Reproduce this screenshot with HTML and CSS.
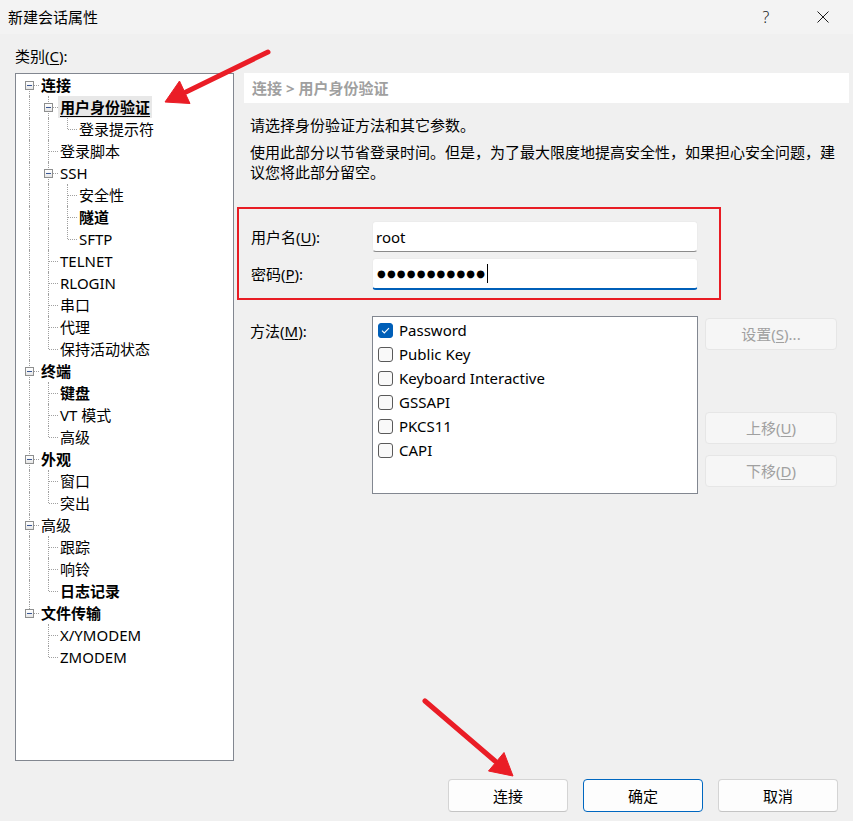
FILE: index.html
```html
<!DOCTYPE html>
<html lang="zh-CN">
<head>
<meta charset="utf-8">
<title>新建会话属性</title>
<link rel="stylesheet" href="styles.css">
</head>
<body>
<div class="dialog">
  <div class="titlebar">
    <span class="title">新建会话属性</span>
    <span class="tb-btn help">?</span>
    <span class="tb-btn close"><svg width="12" height="12" viewBox="0 0 12 12"><path d="M0.5 0.5L11.5 11.5M11.5 0.5L0.5 11.5" stroke="#1b1b1b" stroke-width="1" fill="none"/></svg></span>
  </div>

  <div class="main">
    <div class="cat-label">类别(<u>C</u>):</div>

    <div class="tree">
      <div class="row"><span class="c first"><i class="tog"></i></span><span class="lbl b">连接</span></div>
      <div class="row"><span class="c v"></span><span class="c tee"><i class="tog"></i></span><span class="lbl b sel">用户身份验证</span></div>
      <div class="row"><span class="c v"></span><span class="c v"></span><span class="c ell"></span><span class="lbl">登录提示符</span></div>
      <div class="row"><span class="c v"></span><span class="c tee"></span><span class="lbl">登录脚本</span></div>
      <div class="row"><span class="c v"></span><span class="c tee"><i class="tog"></i></span><span class="lbl">SSH</span></div>
      <div class="row"><span class="c v"></span><span class="c v"></span><span class="c tee"></span><span class="lbl">安全性</span></div>
      <div class="row"><span class="c v"></span><span class="c v"></span><span class="c tee"></span><span class="lbl b">隧道</span></div>
      <div class="row"><span class="c v"></span><span class="c v"></span><span class="c ell"></span><span class="lbl">SFTP</span></div>
      <div class="row"><span class="c v"></span><span class="c tee"></span><span class="lbl">TELNET</span></div>
      <div class="row"><span class="c v"></span><span class="c tee"></span><span class="lbl">RLOGIN</span></div>
      <div class="row"><span class="c v"></span><span class="c tee"></span><span class="lbl">串口</span></div>
      <div class="row"><span class="c v"></span><span class="c tee"></span><span class="lbl">代理</span></div>
      <div class="row"><span class="c v"></span><span class="c ell"></span><span class="lbl">保持活动状态</span></div>
      <div class="row"><span class="c tee"><i class="tog"></i></span><span class="lbl b">终端</span></div>
      <div class="row"><span class="c v"></span><span class="c tee"></span><span class="lbl b">键盘</span></div>
      <div class="row"><span class="c v"></span><span class="c tee"></span><span class="lbl">VT 模式</span></div>
      <div class="row"><span class="c v"></span><span class="c ell"></span><span class="lbl">高级</span></div>
      <div class="row"><span class="c tee"><i class="tog"></i></span><span class="lbl b">外观</span></div>
      <div class="row"><span class="c v"></span><span class="c tee"></span><span class="lbl">窗口</span></div>
      <div class="row"><span class="c v"></span><span class="c ell"></span><span class="lbl">突出</span></div>
      <div class="row"><span class="c tee"><i class="tog"></i></span><span class="lbl">高级</span></div>
      <div class="row"><span class="c v"></span><span class="c tee"></span><span class="lbl">跟踪</span></div>
      <div class="row"><span class="c v"></span><span class="c tee"></span><span class="lbl">响铃</span></div>
      <div class="row"><span class="c v"></span><span class="c ell"></span><span class="lbl b">日志记录</span></div>
      <div class="row"><span class="c ell"><i class="tog"></i></span><span class="lbl b">文件传输</span></div>
      <div class="row"><span class="c"></span><span class="c tee"></span><span class="lbl">X/YMODEM</span></div>
      <div class="row"><span class="c"></span><span class="c ell"></span><span class="lbl">ZMODEM</span></div>
    </div>

    <div class="panel">
      <div class="crumb">连接 &gt; 用户身份验证</div>
      <p class="desc1">请选择身份验证方法和其它参数。</p>
      <p class="desc2">使用此部分以节省登录时间。但是，为了最大限度地提高安全性，如果担心安全问题，建议您将此部分留空。</p>

      <div class="creds">
        <span class="flabel">用户名(<u>U</u>):</span>
        <div class="field">root</div>
        <span class="flabel">密码(<u>P</u>):</span>
        <div class="field focus"><span class="dots">●●●●●●●●●●●</span><span class="caret"></span></div>
      </div>

      <div class="methods">
        <span class="mlabel">方法(<u>M</u>):</span>
        <div class="list">
          <div class="item"><span class="cb on"><svg width="15" height="15" viewBox="0 0 15 15"><path d="M4 7.6L6.3 9.9L11 5.2" stroke="#fff" stroke-width="1.1" fill="none"/></svg></span>Password</div>
          <div class="item"><span class="cb"></span>Public Key</div>
          <div class="item"><span class="cb"></span>Keyboard Interactive</div>
          <div class="item"><span class="cb"></span>GSSAPI</div>
          <div class="item"><span class="cb"></span>PKCS11</div>
          <div class="item"><span class="cb"></span>CAPI</div>
        </div>
        <div class="side">
          <div class="btn dis b1">设置(<u>S</u>)...</div>
          <div class="btn dis b2">上移(<u>U</u>)</div>
          <div class="btn dis b3">下移(<u>D</u>)</div>
        </div>
      </div>
    </div>
  </div>

  <div class="footer">
    <div class="btn fbtn">连接</div>
    <div class="btn fbtn def">确定</div>
    <div class="btn fbtn">取消</div>
  </div>

  <div class="highlight"></div>
  <svg class="arrows" width="853" height="821" viewBox="0 0 853 821">
    <g fill="#ea1d26" stroke="#ea1d26">
      <line x1="268" y1="52" x2="186" y2="92" stroke-width="5" stroke-linecap="round"/>
      <polygon points="165,102 190,103.5 179.5,81" stroke-width="1" stroke-linejoin="round"/>
      <line x1="425" y1="701" x2="495" y2="761" stroke-width="5" stroke-linecap="round"/>
      <polygon points="513,776 488.5,771 504,752.5" stroke-width="1" stroke-linejoin="round"/>
    </g>
  </svg>
</div>
</body>
</html>
```

FILE: styles.css
```css
* { box-sizing: border-box; }
html, body { margin: 0; padding: 0; }
body {
  width: 853px;
  height: 821px;
  overflow: hidden;
  background: #f0f0f0;
  font-family: "Noto Sans", "Noto Sans CJK SC", sans-serif;
  font-size: 15px;
  color: #000;
}
u { text-decoration: underline; text-underline-offset: 2px; }
.dialog { position: relative; width: 853px; height: 821px; }

/* title bar */
.titlebar {
  height: 34px;
  background: #f3f3f3;
  display: flex;
  align-items: center;
  padding-left: 8px;
}
.title { flex: 1; line-height: 20px; }
.tb-btn {
  width: 46px;
  height: 34px;
  display: flex;
  align-items: center;
  justify-content: center;
}
.help { margin-right: 11px; font-size: 16px; font-weight: 300; color: #1b1b1b; }
.close { margin-right: 7px; }

/* main area */
.main {
  display: grid;
  grid-template-columns: 219px 605px;
  grid-template-rows: 27px 688px;
  column-gap: 10px;
  padding: 12px 0 0 15px;
}
.cat-label { grid-column: 1; grid-row: 1; line-height: 20px; }

/* tree */
.tree {
  grid-column: 1;
  grid-row: 2;
  background: #fff;
  border: 1px solid #828790;
  padding: 0 0 0 4px;
}
.row { display: flex; height: 22px; align-items: center; }
.c { position: relative; width: 19px; height: 22px; flex: none; }
.v::before, .tee::before, .ell::before, .first::before {
  content: "";
  position: absolute;
  left: 9px;
  top: 0;
  bottom: 0;
  border-left: 1px dotted #a0a0a0;
}
.ell::before { bottom: auto; height: 11px; }
.first::before { top: 11px; }
.tee::after, .ell::after, .first::after {
  content: "";
  position: absolute;
  left: 10px;
  top: 11px;
  width: 9px;
  border-top: 1px dotted #a0a0a0;
}
.tog {
  position: absolute;
  left: 5px;
  top: 7px;
  width: 9px;
  height: 9px;
  border: 1px solid #8e8f8f;
  background: linear-gradient(#ffffff, #e6e6e6);
  z-index: 1;
}
.tog::before {
  content: "";
  position: absolute;
  left: 1px;
  top: 3px;
  width: 5px;
  height: 1px;
  background: #3a5794;
}
.lbl { padding: 0 2px; line-height: 22px; white-space: nowrap; }
.lbl.b { font-weight: 700; }
.lbl.sel { background: #e8e8e8; text-decoration: underline; text-underline-offset: 3px; }

/* right panel */
.panel { grid-column: 2; grid-row: 2; }
.crumb {
  height: 30px;
  background: #fff;
  padding-left: 8px;
  line-height: 30px;
  color: #a0a0a0;
  font-weight: 700;
}
.desc1, .desc2 { margin: 0; padding-left: 6px; line-height: 20px; }
.desc1 { margin-top: 12px; }
.desc2 { margin-top: 7px; padding-right: 8px; }

.creds {
  margin-top: 39px;
  display: grid;
  grid-template-columns: 128px 326px;
  row-gap: 6px;
  align-items: center;
}
.flabel { padding-left: 7px; line-height: 20px; }
.field {
  height: 31px;
  background: #fff;
  border: 1px solid #ececec;
  border-bottom: 1px solid #8a8a8a;
  border-radius: 4px;
  padding-left: 3px;
  display: flex;
  align-items: center;
  line-height: 20px;
}
.field.focus { border-bottom: 2px solid #005fb8; height: 32px; }
.dots {
  font-family: "DejaVu Sans", sans-serif;
  font-size: 10px;
  letter-spacing: 1.2px;
  padding-left: 1px;
}
.caret { width: 1px; height: 19px; background: #000; margin-left: 1px; }

.methods {
  margin-top: 26px;
  display: grid;
  grid-template-columns: 128px 326px 139px;
  align-items: start;
}
.mlabel { padding: 5px 0 0 6px; line-height: 20px; }
.list {
  height: 178px;
  background: #fff;
  border: 1px solid #828790;
  padding: 1px 0 0 5px;
}
.item { display: flex; align-items: center; height: 24px; line-height: 20px; }
.cb {
  width: 15px;
  height: 15px;
  border: 1px solid #5a5a5a;
  border-radius: 3px;
  background: #f9f9f9;
  margin-right: 6px;
  flex: none;
  display: flex;
}
.cb.on { background: #005fb8; border-color: #005fb8; }
.cb.on svg { margin: -1px; }

.side { display: flex; flex-direction: column; margin-left: 7px; }
.btn {
  display: flex;
  align-items: center;
  justify-content: center;
  border: 1px solid #d4d4d4;
  border-bottom-color: #c4c4c4;
  border-radius: 4px;
  background: #fdfdfd;
  line-height: 20px;
}
.btn.dis {
  height: 32px;
  background: #f6f6f6;
  border-color: #e6e6e6;
  color: #a0a0a0;
}
.b1 { margin-top: 2px; }
.b2 { margin-top: 62px; }
.b3 { margin-top: 11px; }

/* footer */
.footer {
  display: flex;
  justify-content: flex-end;
  gap: 15px;
  padding-right: 15px;
  margin-top: 18px;
}
.fbtn { width: 120px; height: 33px; }
.fbtn.def { border-color: #0067c0; }

/* annotations */
.highlight {
  position: absolute;
  left: 237px;
  top: 207px;
  width: 484px;
  height: 93px;
  border: 2px solid #e81c24;
  pointer-events: none;
}
.arrows { position: absolute; left: 0; top: 0; pointer-events: none; }
```
